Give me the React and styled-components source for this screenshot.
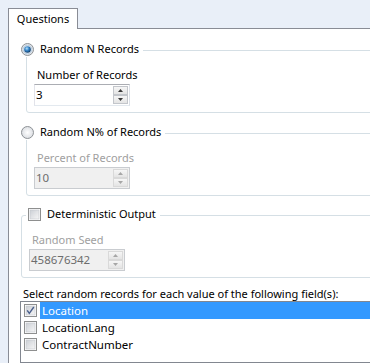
import React from 'react';
import styled, { createGlobalStyle } from 'styled-components';

const Global = createGlobalStyle`
  html, body { margin: 0; padding: 0; }
  body {
    font-family: "Noto Sans", "Open Sans", sans-serif;
    font-size: 11px;
    color: #000;
  }
`;

const Window = styled.div`
  width: 370px;
  height: 363px;
  overflow: hidden;
  background: #e9eff8;
  display: flex;
  flex-direction: column;
`;

const TabStrip = styled.div`
  display: flex;
  align-items: flex-start;
  height: 20px;
  padding: 8px 0 0 8px;
`;

const Tab = styled.div`
  position: relative;
  z-index: 1;
  box-sizing: border-box;
  width: 70px;
  height: 21px;
  margin-bottom: -1px;
  border: 1px solid #898c95;
  border-bottom: none;
  background: #fff;
  display: flex;
  align-items: center;
  justify-content: center;
  line-height: 16px;
`;

const Panel = styled.div`
  flex: 1;
  margin-left: 8px;
  background: #fff;
  border-left: 1px solid #898c95;
  border-top: 1px solid #898c95;
  display: flex;
  flex-direction: column;
`;

const Group = styled.div`
  position: relative;
  margin: ${(p) => p.$mt}px -30px 0 ${(p) => p.$ml}px;
  border: 1px solid #d5dfe5;
  border-radius: 3px;
  padding: 16px 0 6px 7px;
  display: flex;
  flex-direction: column;
  gap: 1px;
`;

const GroupHeader = styled.div`
  position: absolute;
  left: ${(p) => p.$x}px;
  top: -10px;
  height: 16px;
  padding: 0 4px 0 2px;
  background: #fff;
  display: flex;
  align-items: center;
  gap: ${(p) => p.$gap}px;
  line-height: 16px;
  white-space: nowrap;
`;

const FieldLabel = styled.div`
  height: 16px;
  line-height: 16px;
  padding-left: 3px;
  color: ${(p) => (p.$disabled ? '#a0a0a0' : '#000')};
  white-space: nowrap;
`;

const Spinner = styled.div`
  box-sizing: border-box;
  width: 96px;
  height: 22px;
  display: flex;
  align-items: stretch;
  border: 1px solid ${(p) => (p.$disabled ? '#c9ccd0' : '#abadb3')};
  border-left-color: ${(p) => (p.$disabled ? '#c9ccd0' : '#e2e3ea')};
  border-right-color: ${(p) => (p.$disabled ? '#c9ccd0' : '#dbdfe6')};
  border-bottom-color: ${(p) => (p.$disabled ? '#c9ccd0' : '#e3e9ef')};
  background: ${(p) => (p.$disabled ? '#f0f0f0' : '#fff')};
`;

const SpinValue = styled.div`
  flex: 1;
  padding-left: 1px;
  line-height: 20px;
  font-size: 11.5px;
  color: ${(p) => (p.$disabled ? '#6d6d6d' : '#000')};
`;

const SpinButtons = styled.div`
  display: flex;
  flex-direction: column;
  padding: 1px 1px 1px 0;
  width: 15px;
`;

const SpinButton = styled.div`
  box-sizing: border-box;
  flex: 1;
  border: 1px solid ${(p) => (p.$disabled ? '#d9d9d9' : '#c3c6cb')};
  background: linear-gradient(#f6f6f6, #e4e4e4);
  display: flex;
  align-items: center;
  justify-content: center;
`;

const SectionLabel = styled.div`
  margin: 9px 0 0 14px;
  height: 14px;
  line-height: 14px;
  white-space: nowrap;
`;

const ListBox = styled.div`
  flex: 1;
  margin: 0 -30px 0 11px;
  border: 1px solid #828790;
  display: flex;
  flex-direction: column;
`;

const ListRow = styled.div`
  height: 17px;
  display: flex;
  align-items: center;
  padding-left: 3px;
`;

const ListText = styled.div`
  flex: 1;
  margin-left: 3px;
  padding-left: 2px;
  height: 17px;
  line-height: 17px;
  font-size: 11.5px;
  background: ${(p) => (p.$selected ? '#3399ff' : 'transparent')};
  color: ${(p) => (p.$selected ? '#fff' : '#000')};
`;

const Radio = ({ checked }) => (
  <svg width="13" height="13" viewBox="0 0 13 13">
    <defs>
      <radialGradient id="radioBg" cx="50%" cy="50%" r="55%">
        <stop offset="0" stopColor="#ffffff" />
        <stop offset="1" stopColor="#d8dbe0" />
      </radialGradient>
      <radialGradient id="radioDot" cx="40%" cy="35%" r="65%">
        <stop offset="0" stopColor="#b9e2fa" />
        <stop offset="0.45" stopColor="#3d8ccf" />
        <stop offset="1" stopColor="#0c3c6b" />
      </radialGradient>
    </defs>
    <circle cx="6.5" cy="6.5" r="6" fill="url(#radioBg)" stroke="#8e9296" />
    {checked && <circle cx="6.5" cy="6.5" r="4.3" fill="none" stroke="#a9c7e0" strokeWidth="0.8" />}
    {checked && <circle cx="6.5" cy="6.5" r="3.3" fill="url(#radioDot)" />}
  </svg>
);

const Check = ({ checked }) => (
  <svg width="13" height="13" viewBox="0 0 13 13">
    <defs>
      <linearGradient id="chkBg" x1="0" y1="0" x2="1" y2="1">
        <stop offset="0" stopColor="#cbcfd5" />
        <stop offset="1" stopColor="#f7f7f7" />
      </linearGradient>
    </defs>
    <rect x="0.5" y="0.5" width="12" height="12" fill="#fff" stroke="#8e8f8f" />
    <rect x="2" y="2" width="9" height="9" fill="url(#chkBg)" stroke="#c4c7cc" strokeWidth="0.6" />
    {checked && (
      <path d="M3.2 6.4 L5.3 9.4 L9.8 3" fill="none" stroke="#4a5f8c" strokeWidth="1.4" />
    )}
  </svg>
);

const Arrow = ({ up, disabled }) => (
  <svg width="5" height="3" viewBox="0 0 5 3">
    <path d={up ? 'M0 3 L2.5 0 L5 3 Z' : 'M0 0 L5 0 L2.5 3 Z'} fill={disabled ? '#a6a6a6' : '#3a3a3a'} />
  </svg>
);

const Spin = ({ value, disabled }) => (
  <Spinner $disabled={disabled}>
    <SpinValue $disabled={disabled}>{value}</SpinValue>
    <SpinButtons>
      <SpinButton $disabled={disabled}><Arrow up disabled={disabled} /></SpinButton>
      <SpinButton $disabled={disabled}><Arrow disabled={disabled} /></SpinButton>
    </SpinButtons>
  </Spinner>
);

const fields = [
  { name: 'Location', checked: true, selected: true },
  { name: 'LocationLang', checked: false },
  { name: 'ContractNumber', checked: false },
];

export default function App() {
  return (
    <>
      <Global />
      <Window>
        <TabStrip>
          <Tab>Questions</Tab>
        </TabStrip>
        <Panel>
          <Group $mt={21} $ml={17}>
            <GroupHeader $x={-8} $gap={6}>
              <Radio checked />
              <span>Random N Records</span>
            </GroupHeader>
            <FieldLabel>Number of Records</FieldLabel>
            <Spin value="3" />
          </Group>
          <Group $mt={20} $ml={17}>
            <GroupHeader $x={-8} $gap={6}>
              <Radio />
              <span>Random N% of Records</span>
            </GroupHeader>
            <FieldLabel $disabled>Percent of Records</FieldLabel>
            <Spin value="10" disabled />
          </Group>
          <Group $mt={19} $ml={12}>
            <GroupHeader $x={4} $gap={6}>
              <Check />
              <span>Deterministic Output</span>
            </GroupHeader>
            <FieldLabel $disabled>Random Seed</FieldLabel>
            <Spin value="458676342" disabled />
          </Group>
          <SectionLabel>Select random records for each value of the following field(s):</SectionLabel>
          <ListBox>
            {fields.map((f) => (
              <ListRow key={f.name}>
                <Check checked={f.checked} />
                <ListText $selected={f.selected}>{f.name}</ListText>
              </ListRow>
            ))}
          </ListBox>
        </Panel>
      </Window>
    </>
  );
}
